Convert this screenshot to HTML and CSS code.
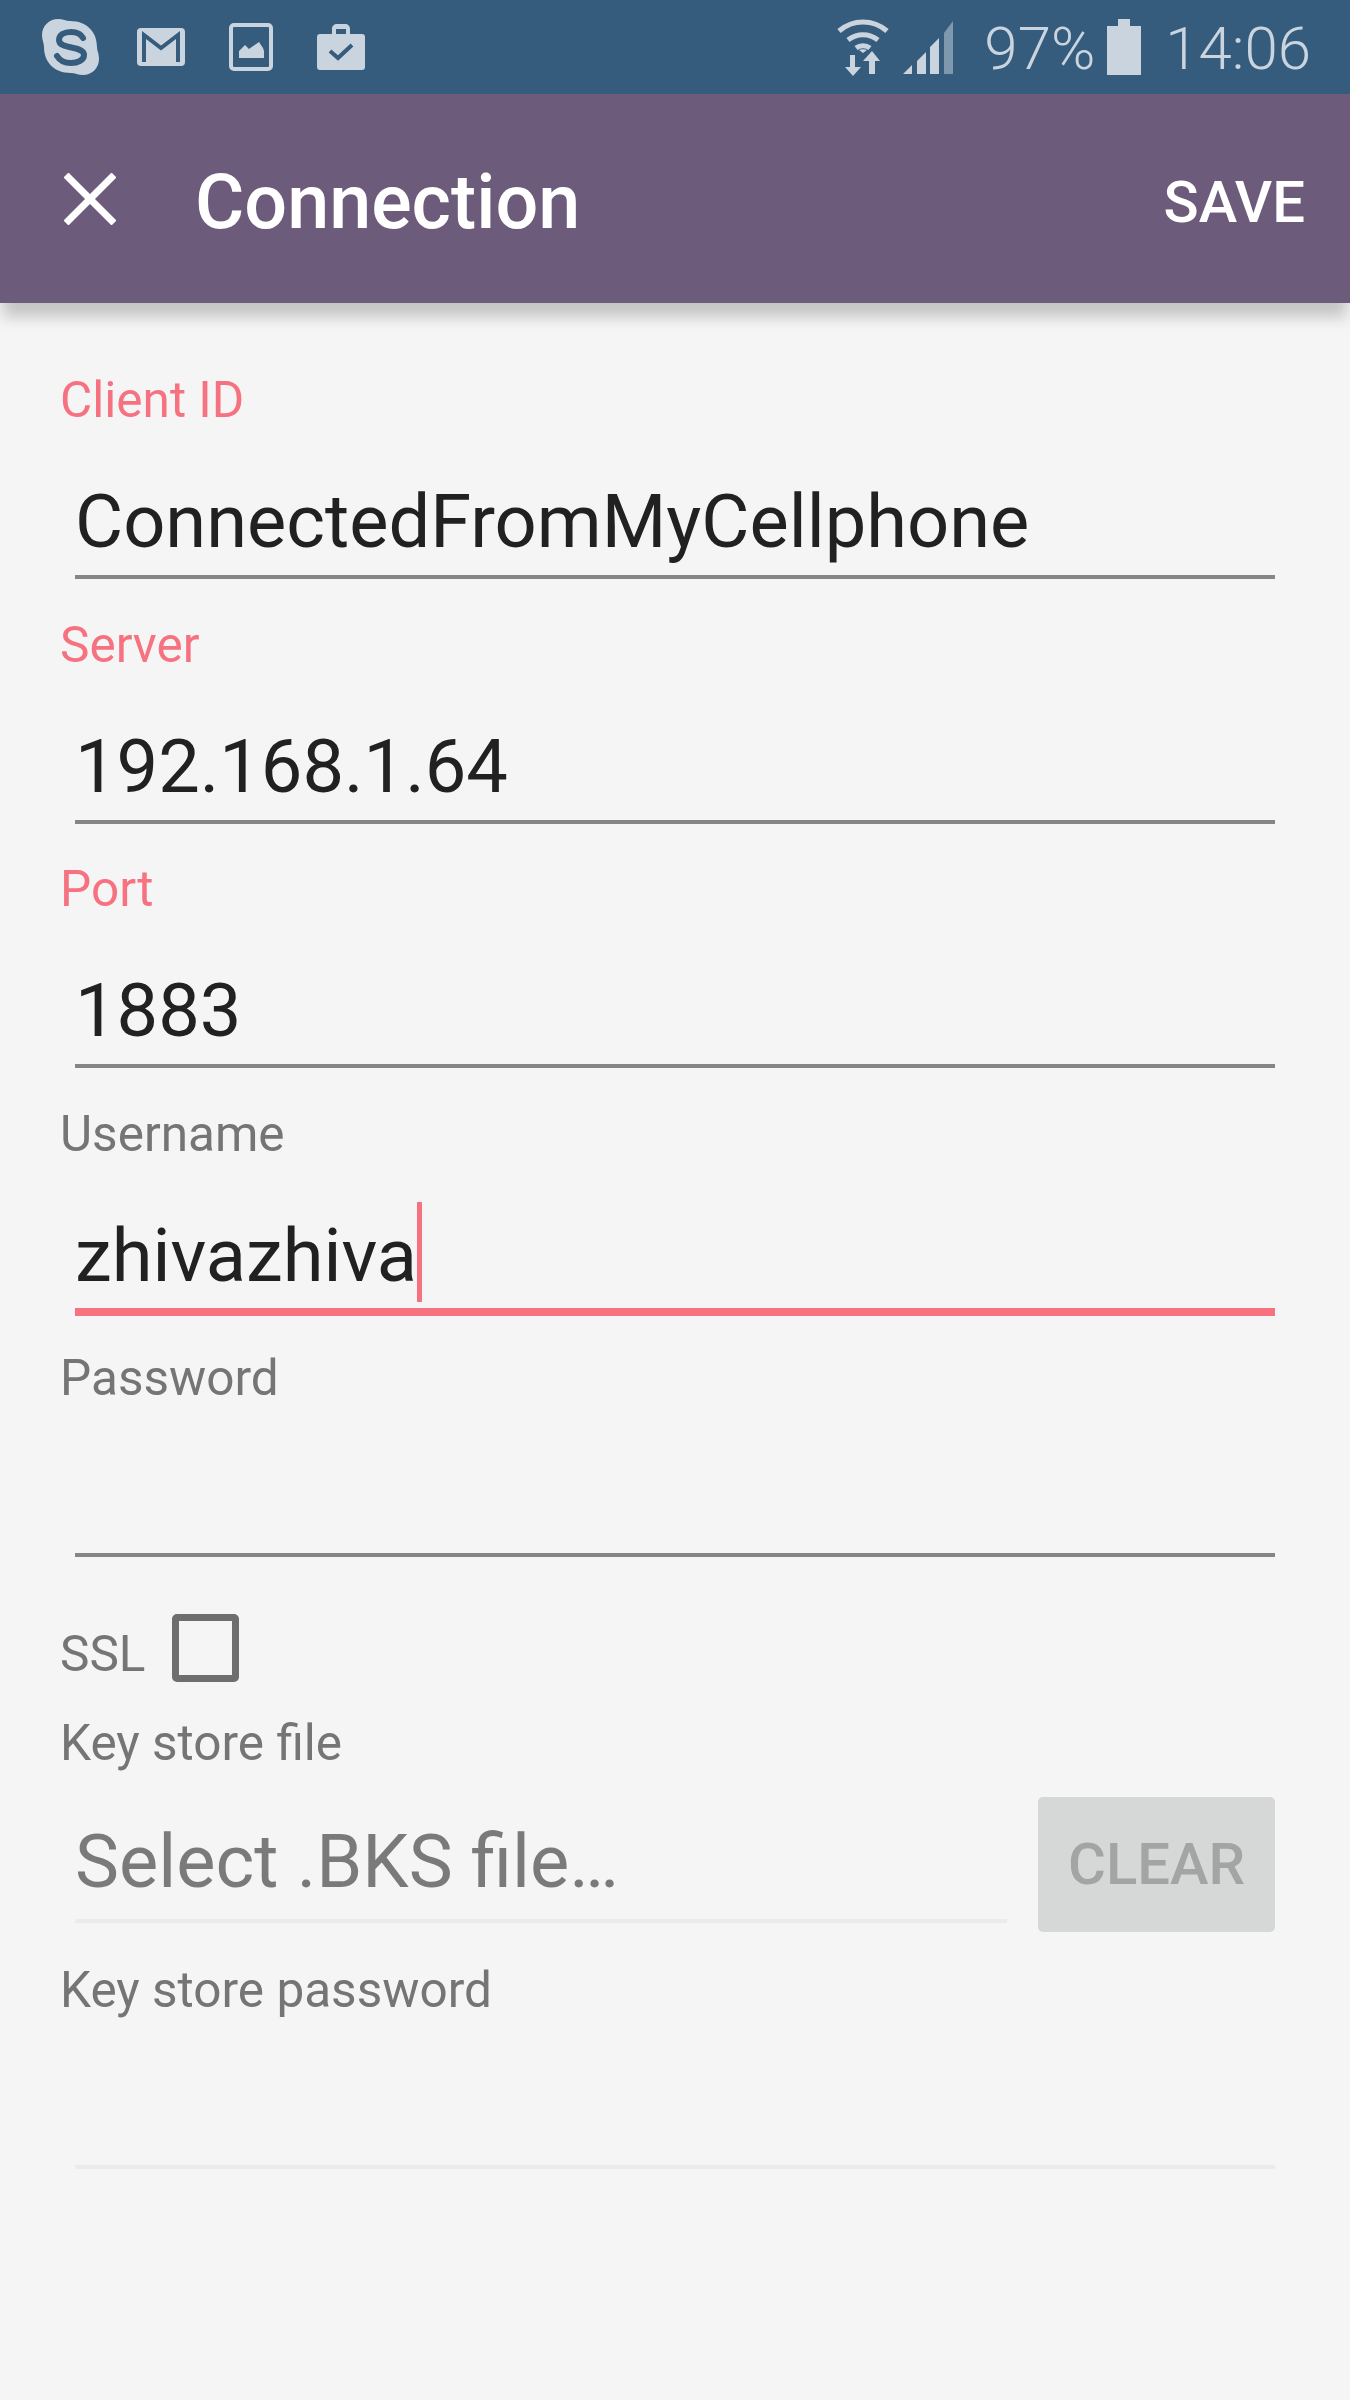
FILE: index.html
```html
<!DOCTYPE html>
<html>
<head>
  <title>Connection</title>
  <link rel="stylesheet" href="styles.css">
</head>
<body>
  <div class="status-bar">
    <div class="status-left">
      <svg class="icon-skype" width="58" height="58" viewBox="0 0 58 58">
        <path fill="#c9d4de" fill-rule="evenodd" d="M16 1c5 0 8 2 12 2 17 0 27 11 27 26 0 4 2 6 2 12 0 9-7 16-16 16-5 0-8-2-12-2C12 55 2 44 2 29c0-4-2-7-2-12C0 8 7 1 16 1z"/>
        <path fill="none" stroke="#355c7d" stroke-width="6" stroke-linecap="round" d="M41 20c-2-4-7-6-12-6-7 0-12 3-12 8 0 10 25 5 25 15 0 5-6 8-13 8-6 0-11-2-14-7"/>
      </svg>
      <svg class="icon-gmail" width="48" height="38" viewBox="0 0 48 38">
        <rect width="48" height="38" rx="4" fill="#c9d4de"/>
        <path fill="none" stroke="#355c7d" stroke-width="4" d="M7 34V7l17 13L41 7v27"/>
      </svg>
      <svg class="icon-photo" width="44" height="48" viewBox="0 0 44 48">
        <rect x="2" y="2" width="40" height="44" rx="3" fill="none" stroke="#c9d4de" stroke-width="4"/>
        <path fill="#c9d4de" d="M10 35v-7l6-6 4 4 10-7 4 6 1 3v7z"/>
      </svg>
      <svg class="icon-case" width="48" height="46" viewBox="0 0 48 46">
        <path fill="#c9d4de" fill-rule="evenodd" d="M15 10V5c0-3 2-5 5-5h8c3 0 5 2 5 5v5h12c2 0 3 1 3 3v30c0 2-1 3-3 3H3c-2 0-3-1-3-3V13c0-2 1-3 3-3zm4-5v5h10V5z"/>
        <path fill="none" stroke="#355c7d" stroke-width="4" d="M13 27l8 7 14-13"/>
      </svg>
    </div>
    <div class="status-right">
      <svg class="icon-wifi" width="52" height="58" viewBox="0 0 52 58">
        <g fill="none" stroke="#c9d4de" stroke-width="5">
          <path d="M2 13c14-12 34-12 48 0"/>
          <path d="M11 22c9-7 21-7 30 0"/>
          <path d="M19 30c4-3 10-3 14 0"/>
        </g>
        <path fill="#c9d4de" d="M26 35l-4-3c2-1 6-1 8 0zM13 37h5v12h6l-8 9-8-9h5zM35 33l8 10h-5v13h-6V43h-6z"/>
      </svg>
      <svg class="icon-signal" width="50" height="53" viewBox="0 0 50 53">
        <path fill="#c9d4de" d="M0 53l9-9v9zM14 53V40l9-9v22zM27 53V26l9-9v36z"/>
        <path fill="#7e98ad" d="M41 53V12l9-12v53z"/>
      </svg>
      <span class="battery-level">97%</span>
      <svg class="icon-battery" width="34" height="56" viewBox="0 0 34 56">
        <path fill="#c9d4de" d="M11 0h12v7h11v49H0V7h11z"/>
      </svg>
      <span class="clock">14:06</span>
    </div>
  </div>

  <div class="toolbar">
    <svg class="icon-close" width="52" height="52" viewBox="0 0 52 52">
      <path fill="none" stroke="#fff" stroke-width="7" d="M2 2l48 48M50 2L2 50"/>
    </svg>
    <div class="toolbar-title">Connection</div>
    <div class="toolbar-action">SAVE</div>
  </div>

  <div class="form">
    <div class="field">
      <div class="label label-active">Client ID</div>
      <div class="input">ConnectedFromMyCellphone</div>
    </div>
    <div class="field">
      <div class="label label-active">Server</div>
      <div class="input">192.168.1.64</div>
    </div>
    <div class="field">
      <div class="label label-active">Port</div>
      <div class="input">1883</div>
    </div>
    <div class="field">
      <div class="label">Username</div>
      <div class="input input-focus">zhivazhiva<span class="caret"></span></div>
    </div>
    <div class="field">
      <div class="label">Password</div>
      <div class="input">&nbsp;</div>
    </div>

    <div class="ssl-row">
      <div class="label">SSL</div>
      <div class="checkbox"></div>
    </div>

    <div class="label key-label">Key store file</div>
    <div class="file-row">
      <div class="input input-disabled file-input">Select .BKS file…</div>
      <div class="clear-button">CLEAR</div>
    </div>

    <div class="label key-password-label">Key store password</div>
    <div class="input input-disabled">&nbsp;</div>
  </div>
</body>
</html>
```

FILE: styles.css
```css
html, body {
  height: 100%;
}
body {
  margin: 0;
  background-color: #f5f5f5;
  font-family: Roboto, sans-serif;
  overflow: hidden;
}
.status-bar {
  height: 94px;
  background-color: #355c7d;
  color: #c9d4de;
  display: flex;
  justify-content: space-between;
  align-items: center;
  padding: 0 39px 0 42px;
  box-sizing: border-box;
}
.status-left, .status-right {
  display: flex;
  align-items: center;
}
.status-bar svg {
  display: block;
}
.icon-gmail { margin-left: 37px; }
.icon-photo { margin-left: 44px; }
.icon-case { margin-left: 44px; }
.icon-signal { margin-left: 14px; }
.battery-level {
  margin-left: 31px;
  padding-top: 3px;
  font-size: 60px;
  font-weight: 300;
}
.icon-battery { margin-left: 12px; }
.clock {
  margin-left: 24px;
  padding-top: 3px;
  font-size: 60px;
  font-weight: 300;
}
.toolbar {
  height: 209px;
  background-color: #6c5b7b;
  color: #fff;
  display: flex;
  align-items: center;
  padding: 0 45px 0 64px;
  box-shadow: 0 17px 14px -3px rgba(0,0,0,0.2);
  position: relative;
}
.toolbar-title {
  margin-left: 79px;
  padding-top: 6px;
  font-size: 75.5px;
  font-weight: 500;
  flex: 1;
}
.toolbar-action {
  padding-top: 6px;
  font-size: 58px;
  font-weight: 500;
}
.form {
  padding: 67px 75px 0 60px;
}
.field {
  margin-bottom: 35.6px;
}
.label {
  height: 60px;
  line-height: 60px;
  font-size: 49.5px;
  color: #757575;
}
.label-active {
  color: #f67280;
}
.input {
  margin-left: 15px;
  padding: 50px 0 11px 0;
  line-height: 84px;
  font-size: 74px;
  color: #212121;
  border-bottom: 4px solid #858585;
  white-space: nowrap;
}
.input-focus {
  padding-bottom: 10px;
  margin-bottom: -3px;
  border-bottom: 8px solid #f67280;
}
.caret {
  display: inline-block;
  width: 5px;
  height: 100px;
  margin: -20px 0 -21px 0;
  background-color: #f67280;
}
.ssl-row {
  display: flex;
  align-items: center;
  padding-top: 19px;
}
.ssl-row .label {
  margin-top: 12px;
}
.checkbox {
  width: 67px;
  height: 68px;
  margin-left: 27px;
  border: 7px solid #6e6e6e;
  border-radius: 5px;
  box-sizing: border-box;
}
.key-label {
  margin-top: 29px;
}
.file-row {
  display: flex;
  align-items: flex-start;
  margin-top: 24px;
}
.input-disabled {
  color: #7a7a7a;
  border-bottom-color: #ebebeb;
}
.file-input {
  flex: 1;
  padding: 23px 0 15px 0;
}
.clear-button {
  width: 237px;
  height: 135px;
  margin-left: 31px;
  background-color: #d6d7d7;
  border-radius: 5px;
  color: #a3a5a5;
  font-size: 58px;
  font-weight: 500;
  display: flex;
  justify-content: center;
  align-items: center;
}
.key-password-label {
  margin-top: 28px;
}
```
